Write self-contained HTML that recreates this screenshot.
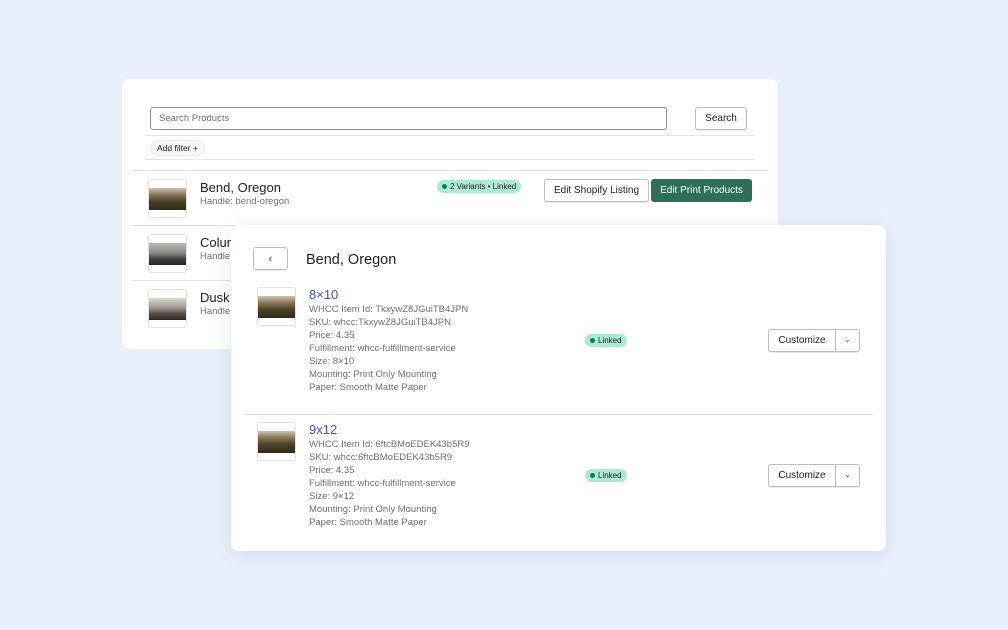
<!DOCTYPE html>
<html><head><meta charset="utf-8"><style>
*{box-sizing:border-box;margin:0;padding:0}
body{width:1008px;height:630px;background:#e9effb;font-family:"Liberation Sans",sans-serif;position:relative;overflow:hidden;color:#202223}
.abs{position:absolute}
.card{position:absolute;background:#fff;border-radius:8px}
.btn{position:absolute;border:1px solid #babfc3;border-radius:3px;background:#fff;font-size:10px;color:#202223;text-align:center;box-shadow:0 1px 0 rgba(0,0,0,.08);padding-top:3px}
.thumb{position:absolute;width:39px;height:39px;border:1px solid #e1e3e5;border-radius:3px;background:#fff;overflow:hidden}
.thumb div{position:absolute;left:0;right:0;top:8px;height:22px}
.t1{background:linear-gradient(180deg,#c9c3b6 0,#8a7a5c 30%,#4e4227 60%,#2e2a18 100%)}
.t2{background:linear-gradient(180deg,#b9b9b6 0,#8a8b87 45%,#444 70%,#222 100%)}
.t3{background:linear-gradient(180deg,#dcdad4 0,#9a9690 45%,#5a5048 70%,#2a2a2c 100%)}
.hr{position:absolute;height:1px;background:#e1e3e5}
.badge{position:absolute;background:#aee9d1;border-radius:10px;font-size:8px;color:#202223;padding:1px 5px 0;height:13px;line-height:12px}
.badge:before{content:"";display:inline-block;width:5px;height:5px;border-radius:50%;background:#007f5f;margin-right:3px;vertical-align:0}
.meta{position:absolute;font-size:9.5px;color:#6d7175;line-height:13px}
</style></head><body>
<div class="card" style="left:122px;top:79px;width:656px;height:270px">
  <div class="abs" style="left:28px;top:28px;width:517px;height:23px;border:1px solid #8c9196;border-radius:3px;font-size:9.5px;color:#6d7175;padding:3px 8px 0;line-height:16px">Search Products</div>
  <div class="btn" style="left:573px;top:28px;width:52px;height:23px;line-height:16px">Search</div>
  <div class="hr" style="left:23px;top:56px;width:610px"></div>
  <div class="abs" style="left:28px;top:61px;height:16px;padding:1px 6px 0;border:1px dashed #e1e3e5;border-radius:8px;background:#f6f6f7;font-size:8.5px;line-height:13px">Add filter +</div>
  <div class="hr" style="left:23px;top:80px;width:610px"></div>
  <div class="hr" style="left:10px;top:91px;width:636px"></div>
  <div class="thumb" style="left:26px;top:100px"><div class="t1"></div></div>
  <div class="abs" style="left:78px;top:101px;font-size:13px">Bend, Oregon</div>
  <div class="abs" style="left:78px;top:117px;font-size:9.5px;color:#6d7175">Handle: bend-oregon</div>
  <div class="badge" style="left:315px;top:101px">2 Variants • Linked</div>
  <div class="btn" style="left:422px;top:100px;width:105px;height:23px;line-height:16px">Edit Shopify Listing</div>
  <div class="abs" style="left:529px;top:100px;width:101px;height:23px;background:#2e7055;border-radius:3px;color:#fff;font-size:10px;text-align:center;padding-top:4px;line-height:16px">Edit Print Products</div>
  <div class="hr" style="left:10px;top:146px;width:636px"></div>
  <div class="thumb" style="left:26px;top:155px"><div class="t2"></div></div>
  <div class="abs" style="left:78px;top:156px;font-size:13px">Colum</div>
  <div class="abs" style="left:78px;top:172px;font-size:9.5px;color:#6d7175">Handle:</div>
  <div class="hr" style="left:10px;top:201px;width:636px"></div>
  <div class="thumb" style="left:26px;top:210px"><div class="t3"></div></div>
  <div class="abs" style="left:78px;top:211px;font-size:13px">Dusk</div>
  <div class="abs" style="left:78px;top:227px;font-size:9.5px;color:#6d7175">Handle:</div>
</div>
<div class="card" style="left:231px;top:225px;width:655px;height:326px;box-shadow:0 4px 20px rgba(60,80,120,.12)">
  <div class="btn" style="left:22px;top:22px;width:35px;height:23px;font-size:11px;line-height:16px;color:#5c5f62">‹</div>
  <div class="abs" style="left:75px;top:27px;font-size:14.5px">Bend, Oregon</div>
  <div class="thumb" style="left:26px;top:62px"><div class="t1"></div></div>
  <div class="abs" style="left:78px;top:62px;font-size:13px;color:#3b5aa6">8×10</div>
  <div class="meta" style="left:78px;top:78px">WHCC Item Id: TkxywZ8JGuiTB4JPN<br>SKU: whcc:TkxywZ8JGuiTB4JPN<br>Price: 4.35<br>Fulfillment: whcc-fulfillment-service<br>Size: 8×10<br>Mounting: Print Only Mounting<br>Paper: Smooth Matte Paper</div>
  <div class="badge" style="left:354px;top:109px">Linked</div>
  <div class="btn" style="left:537px;top:104px;width:68px;height:23px;line-height:16px;border-radius:3px 0 0 3px">Customize</div>
  <div class="btn" style="left:604px;top:104px;width:25px;height:23px;line-height:14px;border-radius:0 3px 3px 0;font-size:8px;color:#5c5f62">⌄</div>
  <div class="hr" style="left:12px;top:189px;width:630px"></div>
  <div class="thumb" style="left:26px;top:197px"><div class="t1"></div></div>
  <div class="abs" style="left:78px;top:197px;font-size:13px;color:#3b5aa6">9x12</div>
  <div class="meta" style="left:78px;top:213px">WHCC Item Id: 6ftcBMoEDEK43b5R9<br>SKU: whcc:6ftcBMoEDEK43b5R9<br>Price: 4.35<br>Fulfillment: whcc-fulfillment-service<br>Size: 9×12<br>Mounting: Print Only Mounting<br>Paper: Smooth Matte Paper</div>
  <div class="badge" style="left:354px;top:244px">Linked</div>
  <div class="btn" style="left:537px;top:239px;width:68px;height:23px;line-height:16px;border-radius:3px 0 0 3px">Customize</div>
  <div class="btn" style="left:604px;top:239px;width:25px;height:23px;line-height:14px;border-radius:0 3px 3px 0;font-size:8px;color:#5c5f62">⌄</div>
</div>
</body></html>
